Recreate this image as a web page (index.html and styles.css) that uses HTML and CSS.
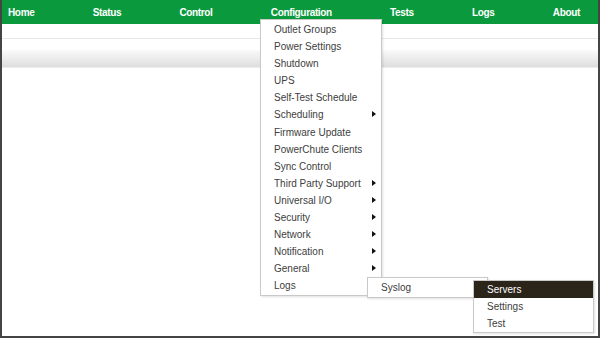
FILE: index.html
```html
<!DOCTYPE html>
<html>
<head>
<meta charset="utf-8">
<link rel="stylesheet" href="styles.css">
</head>
<body>
<div class="frame">
  <nav class="navbar">
    <span class="nav-item">Home</span>
    <span class="nav-item">Status</span>
    <span class="nav-item">Control</span>
    <span class="nav-item nav-config">Configuration</span>
    <span class="nav-item">Tests</span>
    <span class="nav-item">Logs</span>
    <span class="nav-item">About</span>
  </nav>
  <div class="strip"></div>
  <div class="strip2"></div>
  <div class="toolbar"></div>

  <ul class="menu menu-main">
    <li>Outlet Groups</li>
    <li>Power Settings</li>
    <li>Shutdown</li>
    <li>UPS</li>
    <li>Self-Test Schedule</li>
    <li class="has-sub">Scheduling</li>
    <li>Firmware Update</li>
    <li>PowerChute Clients</li>
    <li>Sync Control</li>
    <li class="has-sub">Third Party Support</li>
    <li class="has-sub">Universal I/O</li>
    <li class="has-sub">Security</li>
    <li class="has-sub">Network</li>
    <li class="has-sub">Notification</li>
    <li class="has-sub">General</li>
    <li>Logs</li>
  </ul>

  <ul class="menu menu-syslog">
    <li>Syslog</li>
  </ul>

  <ul class="menu menu-servers">
    <li class="active">Servers</li>
    <li>Settings</li>
    <li>Test</li>
  </ul>
</div>
</body>
</html>
```
FILE: styles.css
```css
* { box-sizing: border-box; }
html, body { margin: 0; padding: 0; background: #fff; }
body { font-family: "Liberation Sans", Arial, sans-serif; }

.frame {
  position: relative;
  width: 600px;
  height: 338px;
  border-left: 2px solid #444;
  border-right: 2px solid #444;
  border-bottom: 2px solid #444;
  overflow: hidden;
  background: #fff;
}

.navbar {
  height: 24px;
  background: #0a9a3d;
  display: flex;
  align-items: center;
  justify-content: space-between;
  padding: 0 18px 0 6px;
}
.nav-item {
  color: #fff;
  font-weight: bold;
  font-size: 10px;
  letter-spacing: -0.35px;
}

.strip {
  height: 15px;
  border-bottom: 1px solid #e8e8e8;
}
.strip2 { height: 11px; }
.toolbar {
  height: 18px;
  background: linear-gradient(#fafafa, #dedede);
  border-bottom: 1px solid #eee;
}

.menu {
  position: absolute;
  margin: 0;
  padding: 0;
  list-style: none;
  background: #fff;
  border: 1px solid #c9c9c9;
  box-shadow: 1px 1px 2px rgba(0,0,0,0.12);
  font-size: 10px;
  color: #404040;
}
.menu li {
  height: 17.1px;
  line-height: 17px;
  padding-left: 13px;
  position: relative;
  white-space: nowrap;
}
.menu li.has-sub::after {
  content: "";
  position: absolute;
  right: 5px;
  top: 5px;
  border-left: 4px solid #111;
  border-top: 3.5px solid transparent;
  border-bottom: 3.5px solid transparent;
}

.menu-main {
  left: 258px;
  top: 19px;
  width: 122px;
  padding-top: 1px;
}
.menu-syslog {
  left: 365px;
  top: 277px;
  width: 121px;
  height: 21px;
}
.menu-syslog li { line-height: 20px; height: 20px; }

.menu-servers {
  left: 471px;
  top: 280px;
  width: 121px;
  height: 53px;
}
.menu-servers li { height: 17px; line-height: 18px; }
.menu-servers li.active {
  background: #2a2419;
  color: #fff;
}
```
